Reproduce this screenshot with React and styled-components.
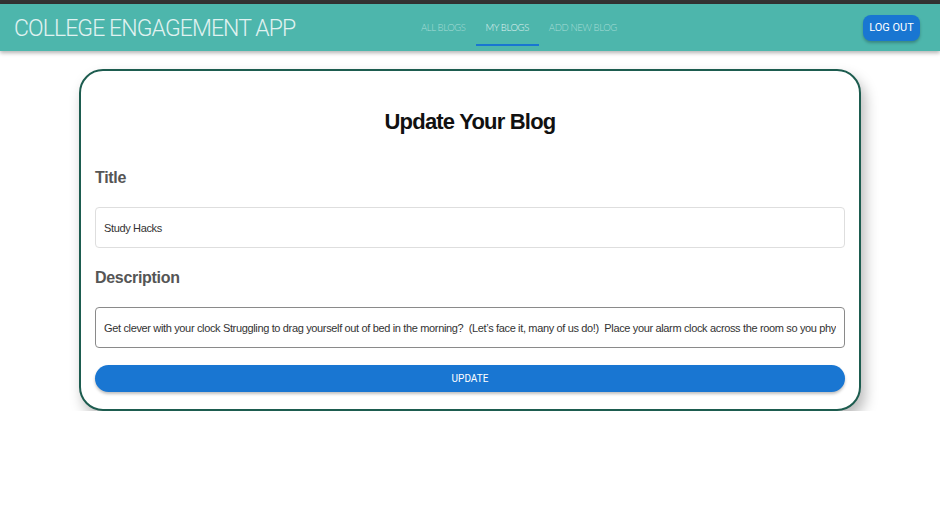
import React from "react";
import styled, { createGlobalStyle } from "styled-components";

const GlobalStyle = createGlobalStyle`
  body {
    margin: 0;
    background: #ffffff;
    font-family: "Liberation Sans", Arial, sans-serif;
  }
`;

export default function App() {
  return (
    <>
      <GlobalStyle />
      <TopStrip />
      <Header>
        <Brand>COLLEGE ENGAGEMENT APP</Brand>
        <Nav>
          <NavItem>ALL BLOGS</NavItem>
          <NavItem active>MY BLOGS</NavItem>
          <NavItem>ADD NEW BLOG</NavItem>
        </Nav>
        <LogoutButton>LOG OUT</LogoutButton>
      </Header>
      <Main>
        <Card>
          <Heading>Update Your Blog</Heading>
          <Label>Title</Label>
          <Field defaultValue="Study Hacks" />
          <Label>Description</Label>
          <Field
            focused
            defaultValue="Get clever with your clock Struggling to drag yourself out of bed in the morning?  (Let’s face it, many of us do!)  Place your alarm clock across the room so you physically have to get up to turn it off."
          />
          <SubmitButton>UPDATE</SubmitButton>
        </Card>
      </Main>
    </>
  );
}

const TopStrip = styled.div`
  height: 4px;
  background: #333333;
`;

const Header = styled.header`
  height: 47px;
  background: #4db6ac;
  box-shadow: 0 2px 4px rgba(0, 0, 0, 0.3);
  display: flex;
  align-items: center;
  padding: 0 20px 0 14px;
  position: relative;
`;

const Brand = styled.div`
  font-family: Roboto, Lato, sans-serif;
  font-weight: 300;
  font-size: 23px;
  letter-spacing: -0.9px;
  color: #e0f2f1;
  padding-top: 2px;
  flex: 1;
`;

const Nav = styled.nav`
  display: flex;
  position: absolute;
  left: 411px;
  top: 0;
  bottom: 0;
`;

const NavItem = styled.div`
  font-family: Lato, "Open Sans", sans-serif;
  font-weight: 300;
  font-size: 9.5px;
  letter-spacing: -0.4px;
  color: ${(p) => (p.active ? "#e0f2f1" : "#a7dcd6")};
  padding: 6px 10px 0;
  margin-bottom: 5px;
  display: flex;
  align-items: center;
  border-bottom: 2px solid ${(p) => (p.active ? "#1976d2" : "transparent")};
`;

const LogoutButton = styled.button`
  font-family: Roboto, sans-serif;
  font-size: 11px;
  font-weight: 400;
  color: #ffffff;
  background: #1976d2;
  border: none;
  border-radius: 8px;
  height: 26px;
  width: 57px;
  padding: 0;
  box-shadow: 0 2px 3px rgba(0, 0, 0, 0.25);
`;

const Main = styled.main`
  padding: 18px 79px 0 79px;
`;

const Card = styled.section`
  border: 2px solid #1d5c4f;
  border-radius: 24px;
  box-shadow: 4px 8px 14px rgba(0, 0, 0, 0.28);
  padding: 34px 14px 17px 14px;
  display: flex;
  flex-direction: column;
  background: #ffffff;
`;

const Heading = styled.h1`
  margin: 4px 0 33px;
  text-align: center;
  font-size: 22px;
  letter-spacing: -0.8px;
  font-weight: 700;
  color: #111111;
`;

const Label = styled.h2`
  margin: 1px 0 20px;
  font-size: 16px;
  letter-spacing: -0.3px;
  font-weight: 700;
  color: #555555;
`;

const Field = styled.input`
  box-sizing: border-box;
  height: 41px;
  margin-bottom: ${(p) => (p.focused ? "17px" : "20px")};
  border: 1px solid ${(p) => (p.focused ? "#8a8a8a" : "#dedede")};
  border-radius: 4px;
  padding: 0 8px;
  font-family: "Liberation Sans", Arial, sans-serif;
  font-size: 11px;
  letter-spacing: -0.35px;
  color: #333333;
  outline: none;
`;

const SubmitButton = styled.button`
  height: 27px;
  border: none;
  border-radius: 14px;
  background: #1976d2;
  color: #ffffff;
  font-family: Roboto, sans-serif;
  font-size: 10px;
  box-shadow: 0 2px 3px rgba(0, 0, 0, 0.25);
`;
